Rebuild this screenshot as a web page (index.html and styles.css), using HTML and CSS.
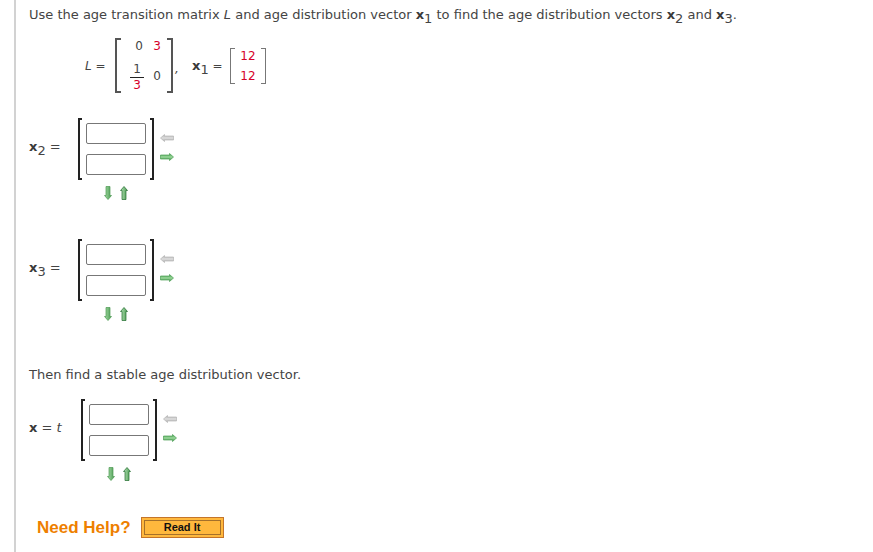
FILE: index.html
```html
<!DOCTYPE html>
<html lang="en">
<head>
  <meta charset="UTF-8" />
  <title>Age distribution vectors</title>
  <link rel="stylesheet" href="styles.css">
</head>
<body>

<svg class="defs" width="0" height="0">
  <defs>
    <linearGradient id="green-h" x1="0" y1="0" x2="0" y2="1">
      <stop offset="0" stop-color="#3f9a4a"/>
      <stop offset="0.5" stop-color="#9ad89a"/>
      <stop offset="1" stop-color="#3a8a45"/>
    </linearGradient>
    <linearGradient id="green-v" x1="0" y1="0" x2="1" y2="0">
      <stop offset="0" stop-color="#a5dca5"/>
      <stop offset="1" stop-color="#4a9a52"/>
    </linearGradient>
    <linearGradient id="green-dark" x1="0" y1="0" x2="1" y2="0">
      <stop offset="0" stop-color="#b5e2b5"/>
      <stop offset="1" stop-color="#4a9a52"/>
    </linearGradient>
    <linearGradient id="grey-h" x1="0" y1="0" x2="0" y2="1">
      <stop offset="0" stop-color="#b0b0b0"/>
      <stop offset="0.5" stop-color="#dedede"/>
      <stop offset="1" stop-color="#a8a8a8"/>
    </linearGradient>
    <symbol id="arrow-left" viewBox="0 0 14 8">
      <path d="M0.5 4 4.5 0.5V2H13.5V6H4.5V7.5Z" fill="url(#grey-h)" stroke="#b4b4b4" stroke-width="0.7"/>
    </symbol>
    <symbol id="arrow-right" viewBox="0 0 14 8">
      <path d="M13.5 4 9.5 0.5V2H0.5V6H9.5V7.5Z" fill="url(#green-h)" stroke="#4c9f55" stroke-width="0.7"/>
    </symbol>
    <symbol id="arrow-down" viewBox="0 0 8 14">
      <path d="M4 13.5 0.5 9.5H2V0.5H6V9.5H7.5Z" fill="url(#green-v)" stroke="#4c9a52" stroke-width="0.7"/>
    </symbol>
    <symbol id="arrow-up" viewBox="0 0 8 14">
      <path d="M4 0.5 0.5 4.5H2V13.5H6V4.5H7.5Z" fill="url(#green-dark)" stroke="#1f6b2c" stroke-width="0.7"/>
    </symbol>
  </defs>
</svg>

<main class="question">

  <p class="prompt">Use the age transition matrix <i>L</i> and age distribution vector <b class="vec">x<sub>1</sub></b> to find the age distribution vectors <b class="vec">x<sub>2</sub></b> and <b class="vec">x<sub>3</sub></b>.</p>

  <div class="given">
    <span class="given-label"><i>L</i> =</span>
    <div class="bracket bracket-l">
      <table class="l-table">
        <tr><td>0</td><td class="red">3</td></tr>
        <tr>
          <td><span class="frac"><span class="frac-top">1</span><span class="red">3</span></span></td>
          <td class="l-zero">0</td>
        </tr>
      </table>
    </div>
    <span class="comma">,</span>
    <span class="given-label x1"><b class="vec">x<sub>1</sub></b> =</span>
    <div class="bracket bracket-x">
      <span class="red">12</span>
      <span class="red">12</span>
    </div>
  </div>

  <div class="answer answer-x2">
    <span class="answer-label"><b class="vec">x<sub>2</sub></b> =</span>
    <div class="answer-body">
      <div class="answer-top">
        <div class="bracket bracket-input">
          <input type="text" class="cell">
          <input type="text" class="cell">
        </div>
        <div class="arrows-side">
          <svg width="14" height="8"><use href="#arrow-left"/></svg>
          <svg width="14" height="8"><use href="#arrow-right"/></svg>
        </div>
      </div>
      <div class="arrows-under">
        <svg width="8" height="14"><use href="#arrow-down"/></svg>
        <svg width="8" height="14"><use href="#arrow-up"/></svg>
      </div>
    </div>
  </div>

  <div class="answer answer-x3">
    <span class="answer-label"><b class="vec">x<sub>3</sub></b> =</span>
    <div class="answer-body">
      <div class="answer-top">
        <div class="bracket bracket-input">
          <input type="text" class="cell">
          <input type="text" class="cell">
        </div>
        <div class="arrows-side">
          <svg width="14" height="8"><use href="#arrow-left"/></svg>
          <svg width="14" height="8"><use href="#arrow-right"/></svg>
        </div>
      </div>
      <div class="arrows-under">
        <svg width="8" height="14"><use href="#arrow-down"/></svg>
        <svg width="8" height="14"><use href="#arrow-up"/></svg>
      </div>
    </div>
  </div>

  <p class="then">Then find a stable age distribution vector.</p>

  <div class="answer answer-t">
    <span class="answer-label"><b class="vec">x</b> = <i>t</i></span>
    <div class="answer-body">
      <div class="answer-top">
        <div class="bracket bracket-input">
          <input type="text" class="cell">
          <input type="text" class="cell">
        </div>
        <div class="arrows-side">
          <svg width="14" height="8"><use href="#arrow-left"/></svg>
          <svg width="14" height="8"><use href="#arrow-right"/></svg>
        </div>
      </div>
      <div class="arrows-under">
        <svg width="8" height="14"><use href="#arrow-down"/></svg>
        <svg width="8" height="14"><use href="#arrow-up"/></svg>
      </div>
    </div>
  </div>

  <div class="help">
    <span class="help-text">Need Help?</span>
    <button class="read-it"><span>Read It</span></button>
  </div>

</main>

</body>
</html>
```

FILE: styles.css
```css
*, *::before, *::after { box-sizing: border-box; }

html, body { margin: 0; padding: 0; }

body {
  background: #fff;
  color: #444;
  font-family: "DejaVu Sans", Verdana, sans-serif;
  font-size: 13px;
  line-height: 16px;
  height: 552px;
  overflow: hidden;
}

.defs { display: block; height: 0; }

/* left rule of the question panel */
.question {
  margin-left: 14px;
  border-left: 2px solid #d2d2d2;
  padding: 7px 0 0 13px;
  height: 552px;
}

p { margin: 0; }

.red { color: #d6002a; }

.vec { color: #3a3a3a; font-size: 13px; }
.vec sub { font-weight: normal; font-size: 13px; line-height: 0; vertical-align: -4px; color: #444; }

/* given matrix + vector */
.given {
  display: flex;
  align-items: center;
  margin: 15px 0 0 56px;
  height: 55px;
  font-size: 12px;
}

.given-label { width: 30px; white-space: nowrap; }
.given-label.x1 { width: 38px; }
.comma { align-self: flex-end; width: 19px; padding-left: 2px; margin-bottom: 16px; font-style: italic; }

.bracket {
  position: relative;
  border-left: 2px solid #222;
  border-right: 2px solid #222;
}
.bracket::before, .bracket::after {
  content: "";
  position: absolute;
  top: 0; bottom: 0;
  width: 2px;
  border-top: 2px solid #222;
  border-bottom: 2px solid #222;
}
.bracket::before { left: 0; }
.bracket::after { right: 0; }

.bracket-l { width: 58px; height: 55px; border-color: #555; }
.bracket-l::before, .bracket-l::after { width: 4px; border-color: #555; }

.l-table { border-collapse: collapse; margin: 0 0 0 10px; }
.l-table td { padding: 0; text-align: center; vertical-align: middle; }
.l-table td:first-child { width: 24px; }
.l-table td:last-child { width: 12px; }
.l-table tr:first-child td { height: 16px; }
.l-table .l-zero { padding-top: 4px; }

.frac { display: inline-flex; flex-direction: column; line-height: 15px; width: 14px; margin-right: 4px; margin-top: 8px; }
.frac-top { border-bottom: 1px solid #222; color: #444; }

.bracket-x {
  width: 36px;
  height: 36px;
  display: flex;
  flex-direction: column;
  justify-content: space-between;
  align-items: center;
  padding: 0;
  border-width: 1px;
  border-color: #777;
}
.bracket-x::before, .bracket-x::after { width: 4px; border-color: #777; border-width: 1px 0; }

/* answer blocks */
.answer { display: flex; position: relative; }

.answer-label { width: 49px; padding-top: 21px; white-space: nowrap; }

.answer-x2 { margin-top: 25px; }
.answer-x3 { margin-top: 39px; }
.answer-t { margin-top: 16px; }
.answer-t .answer-label { width: 52px; padding-top: 21px; }

.answer-top { display: flex; align-items: flex-start; }

.bracket-input {
  width: 76px;
  height: 62px;
  padding: 5px 6px;
  display: flex;
  flex-direction: column;
  gap: 10px;
}

.cell {
  display: block;
  width: 60px;
  height: 21px;
  padding: 0;
  margin: 0;
  background: #fff;
  border: 1px solid #777;
  border-radius: 2px;
  outline: none;
}

.arrows-side {
  display: flex;
  flex-direction: column;
  gap: 11px;
  padding: 16px 0 0 6px;
}
.arrows-side svg, .arrows-under svg { display: block; }

.arrows-under {
  display: flex;
  justify-content: flex-start;
  gap: 8px;
  padding: 6px 0 0 26px;
}

.then { margin-top: 46px; }

.help {
  display: flex;
  align-items: center;
  margin: 36px 0 0 8px;
}

.help-text {
  color: #ee7f00;
  font-family: "Liberation Sans", Arial, sans-serif;
  font-size: 17px;
  font-weight: bold;
  margin-right: 10px;
}

.read-it {
  width: 83px;
  height: 21px;
  padding: 2px;
  background: #ffb83d;
  border: 1px solid #c4752a;
  font-family: "Liberation Sans", Arial, sans-serif;
  font-size: 11px;
  font-weight: bold;
  color: #111;
  display: flex;
}
.read-it span {
  flex: 1;
  border: 1px solid #a5702a;
  line-height: 13px;
}
```
